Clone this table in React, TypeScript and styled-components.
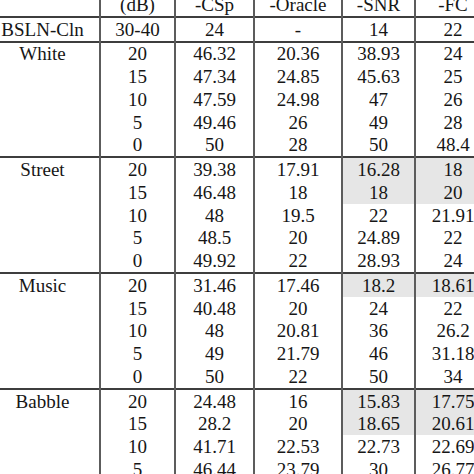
import styled, { createGlobalStyle } from "styled-components";

const GlobalStyle = createGlobalStyle`
  html, body {
    margin: 0;
    padding: 0;
    background: #ffffff;
    overflow: hidden;
  }
`;

const Page = styled.div`
  width: 474px;
  height: 474px;
  overflow: hidden;
  background: #ffffff;
`;

const Table = styled.table`
  margin: -7px 0 0 -14px;
  border-collapse: collapse;
  table-layout: fixed;
  width: 504px;
  font-family: "Liberation Serif", "Times New Roman", serif;
  font-size: 19px;
  color: #161616;
`;

const Cell = styled.td<{ $shade?: boolean; $line?: boolean }>`
  height: 22.75px;
  padding: 0;
  line-height: 21px;
  text-align: center;
  white-space: nowrap;
  border-left: 2px solid #5c5c5c;
  border-top: ${p => (p.$line ? "2px solid #3e3e3e" : "none")};
  background: ${p => (p.$shade ? "#e6e6e6" : "transparent")};

  &:first-child {
    border-left: none;
  }
`;

const HeadCell = styled(Cell).attrs({ as: "th" })`
  font-weight: 400;
`;

const widths = [114, 75, 79, 88, 73, 75];

type Group = { name: string; rows: string[][]; shade: number[] };

const header = ["", "(dB)", "-CSp", "-Oracle", "-SNR", "-FC"];
const baseline = ["BSLN-Cln", "30-40", "24", "-", "14", "22"];

const groups: Group[] = [
  {
    name: "White",
    rows: [
      ["20", "46.32", "20.36", "38.93", "24"],
      ["15", "47.34", "24.85", "45.63", "25"],
      ["10", "47.59", "24.98", "47", "26"],
      ["5", "49.46", "26", "49", "28"],
      ["0", "50", "28", "50", "48.4"],
    ],
    shade: [],
  },
  {
    name: "Street",
    rows: [
      ["20", "39.38", "17.91", "16.28", "18"],
      ["15", "46.48", "18", "18", "20"],
      ["10", "48", "19.5", "22", "21.91"],
      ["5", "48.5", "20", "24.89", "22"],
      ["0", "49.92", "22", "28.93", "24"],
    ],
    shade: [0, 1],
  },
  {
    name: "Music",
    rows: [
      ["20", "31.46", "17.46", "18.2", "18.61"],
      ["15", "40.48", "20", "24", "22"],
      ["10", "48", "20.81", "36", "26.2"],
      ["5", "49", "21.79", "46", "31.18"],
      ["0", "50", "22", "50", "34"],
    ],
    shade: [0],
  },
  {
    name: "Babble",
    rows: [
      ["20", "24.48", "16", "15.83", "17.75"],
      ["15", "28.2", "20", "18.65", "20.61"],
      ["10", "41.71", "22.53", "22.73", "22.69"],
      ["5", "46.44", "23.79", "30", "26.77"],
    ],
    shade: [0, 1],
  },
];

export default function App() {
  return (
    <Page>
      <GlobalStyle />
      <Table>
        <colgroup>
          {widths.map((w, i) => (
            <col key={i} style={{ width: w }} />
          ))}
        </colgroup>
        <thead>
          <tr>
            {header.map((h, i) => (
              <HeadCell key={i}>{h}</HeadCell>
            ))}
          </tr>
        </thead>
        <tbody>
          <tr>
            {baseline.map((v, i) => (
              <Cell key={i} $line>
                {v}
              </Cell>
            ))}
          </tr>
          {groups.map(g =>
            g.rows.map((r, ri) => (
              <tr key={g.name + ri}>
                <Cell $line={ri === 0}>{ri === 0 ? g.name : ""}</Cell>
                {r.map((v, ci) => (
                  <Cell
                    key={ci}
                    $line={ri === 0}
                    $shade={ci >= 3 && g.shade.includes(ri)}
                  >
                    {v}
                  </Cell>
                ))}
              </tr>
            ))
          )}
        </tbody>
      </Table>
    </Page>
  );
}
